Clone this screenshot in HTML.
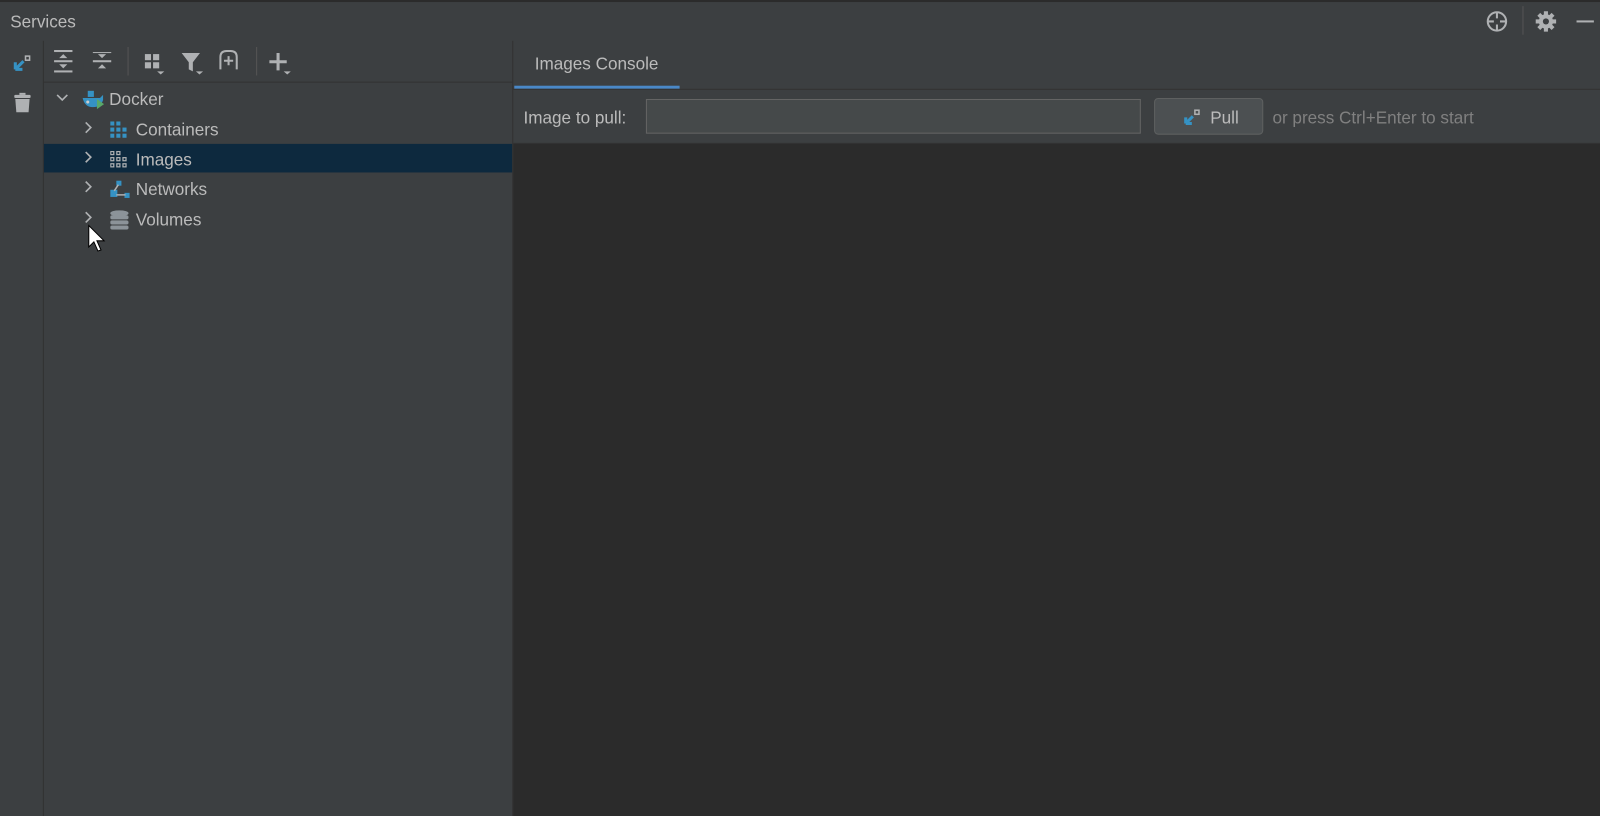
<!DOCTYPE html>
<html><head><style>
*{margin:0;padding:0;box-sizing:border-box}
body{width:1600px;height:800px;background:#3c3f41;font-family:"Liberation Sans",sans-serif;color:#bbbbbb;overflow:hidden}
#w{position:relative;width:1568px;height:784px;transform:scale(1.020408);transform-origin:0 0}
.a{position:absolute}
.t{font-size:16.8px;white-space:nowrap}
</style></head><body><div id="w">
<div class="a" style="left:0;top:0;width:1568px;height:2px;background:#2b2b2b"></div>
<div class="a t" style="left:10px;top:12px;">Services</div>
<svg class="a" style="left:1455px;top:9px" width="24" height="24" viewBox="0 0 24 24"><circle cx="12" cy="12" r="9" fill="none" stroke="#afb1b3" stroke-width="2"/><path d="M12 3v6M12 15v6M3 12h6M15 12h6" stroke="#afb1b3" stroke-width="2"/></svg>
<div class="a" style="left:1492px;top:6px;width:1px;height:28px;background:#555"></div>
<svg class="a" style="left:1504px;top:10px" width="22" height="22" viewBox="0 0 22 22"><g fill="#afb1b3"><circle cx="11" cy="11" r="7"/><g stroke="#afb1b3" stroke-width="4"><path d="M11 1v20M1 11h20M4 4l14 14M18 4L4 18"/></g></g><circle cx="11" cy="11" r="3" fill="#3c3f41"/></svg>
<div class="a" style="left:1545px;top:20px;width:17px;height:2px;background:#afb1b3"></div>
<div class="a" style="left:42px;top:40px;width:1px;height:760px;background:#323232"></div>
<svg class="a" style="left:12px;top:52px" width="20" height="20" viewBox="0 0 20 20"><path d="M3 16L11 8M3 16h7M3 16V9" stroke="#3592c4" stroke-width="3" fill="none"/><rect x="13" y="3" width="4" height="4" fill="none" stroke="#afb1b3" stroke-width="1.5"/></svg>
<svg class="a" style="left:12px;top:90px" width="20" height="22" viewBox="0 0 20 22"><rect x="2" y="3" width="16" height="3" rx="1" fill="#afb1b3"/><rect x="7" y="1" width="6" height="2" fill="#afb1b3"/><path d="M3 7h14l-1 13H4z" fill="#afb1b3"/></svg>
<svg class="a" style="left:50px;top:46px" width="250" height="30" viewBox="0 0 250 30">
<g fill="#afb1b3" stroke="none">
<rect x="3" y="3" width="18" height="2"/><rect x="3" y="23" width="18" height="2"/><path d="M12 7l-4 4h8zM12 21l-4-4h8z"/><rect x="3" y="13" width="18" height="2"/>
<rect x="41" y="13" width="18" height="2"/><path d="M50 11l-4-4h8zM50 17l-4 4h8z"/><rect x="41" y="5" width="18" height="1"/>
<rect x="92" y="7" width="6" height="6"/><rect x="100" y="7" width="6" height="6"/><rect x="92" y="15" width="6" height="6"/><rect x="100" y="15" width="6" height="6"/><path d="M104 24h7l-3.5 3z"/>
<path d="M128 6h18l-7 9v9l-4-2v-7z"/><path d="M142 24h7l-3.5 3z"/>
<path d="M221 6h3v7h7v3h-7v7h-3v-7h-7v-3h7z"/><path d="M228 24h7l-3.5 3z"/>
</g>
<path d="M166 22V10q0-6 6-6h4q6 0 6 6v12M174 9v9M169.5 13.5h9" stroke="#afb1b3" stroke-width="2" fill="none"/>
<rect x="75" y="0" width="1" height="28" fill="#555"/><rect x="201" y="0" width="1" height="28" fill="#555"/>
</svg>
<div class="a" style="left:43px;top:80px;width:459px;height:1px;background:#323232"></div>
<svg class="a" style="left:54px;top:89px" width="14" height="14"><path d="M2 4l5 5 5-5" stroke="#afb1b3" stroke-width="1.6" fill="none"/></svg>
<svg class="a" style="left:80px;top:87px" width="24" height="22" viewBox="0 0 24 22"><rect x="6" y="2" width="6" height="6" fill="#3592c4"/><path d="M1 9h17l3-3v5q-2 7-10 7-8 0-10-9z" fill="#3592c4"/><circle cx="6" cy="13" r="1.5" fill="#ccc"/><path d="M15 10l7 5-7 5z" fill="#59a869"/></svg>
<div class="a t" style="left:107px;top:88px;">Docker</div>
<div class="a" style="left:43px;top:141px;width:459px;height:28px;background:#0d293e"></div>
<svg class="a" style="left:80px;top:118px" width="14" height="110"><g stroke="#afb1b3" stroke-width="1.6" fill="none"><path d="M4 2l5 5-5 5"/><path d="M4 31l5 5-5 5"/><path d="M4 60l5 5-5 5"/><path d="M4 90l5 5-5 5"/></g></svg>
<svg class="a" style="left:108px;top:119px" width="18" height="18"><g fill="#3592c4"><rect x="0" y="0" width="4" height="4"/><rect x="0" y="6" width="4" height="4"/><rect x="6" y="6" width="4" height="4"/><rect x="6" y="12" width="4" height="4"/><rect x="0" y="12" width="4" height="4"/><rect x="12" y="6" width="4" height="4"/><rect x="12" y="12" width="4" height="4"/><rect x="6" y="0" width="4" height="4"/></g></svg>
<div class="a t" style="left:133px;top:118px;">Containers</div>
<svg class="a" style="left:108px;top:148px" width="18" height="18"><g fill="none" stroke="#afb1b3" stroke-width="1.2"><rect x="0.5" y="0.5" width="3" height="3"/><rect x="6.5" y="0.5" width="3" height="3"/><rect x="0.5" y="6.5" width="3" height="3"/><rect x="6.5" y="6.5" width="3" height="3"/><rect x="12.5" y="6.5" width="3" height="3"/><rect x="0.5" y="12.5" width="3" height="3"/><rect x="6.5" y="12.5" width="3" height="3"/><rect x="12.5" y="12.5" width="3" height="3"/></g></svg>
<div class="a t" style="left:133px;top:147px;">Images</div>
<svg class="a" style="left:108px;top:177px" width="20" height="18"><rect x="6" y="0" width="5" height="5" fill="#3592c4"/><rect x="0" y="9" width="7" height="7" fill="#3592c4"/><rect x="14" y="12" width="5" height="5" fill="#3592c4"/><path d="M8 4l-4 6M6 14h9" stroke="#afb1b3" stroke-width="1.5"/></svg>
<div class="a t" style="left:133px;top:176px;">Networks</div>
<svg class="a" style="left:108px;top:206px" width="18" height="19"><g fill="#8c9399"><ellipse cx="9" cy="3" rx="9" ry="3"/><rect x="0" y="5" width="18" height="4" rx="2"/><rect x="0" y="10" width="18" height="4" rx="2"/><rect x="0" y="15" width="18" height="4" rx="2"/></g></svg>
<div class="a t" style="left:133px;top:206px;">Volumes</div>
<svg class="a" style="left:86px;top:220px" width="20" height="28" viewBox="0 0 20 28"><path d="M1 1v21l5-5 4 9 3-1-4-9h7z" fill="#fff" stroke="#000" stroke-width="1"/></svg>
<div class="a" style="left:502px;top:40px;width:1px;height:760px;background:#323232"></div>
<div class="a t" style="left:524px;top:53px;">Images Console</div>
<div class="a" style="left:504px;top:84px;width:162px;height:3px;background:#4a88c7"></div>
<div class="a" style="left:503px;top:87px;width:1097px;height:1px;background:#323232"></div>
<div class="a t" style="left:513px;top:106px;">Image to pull:</div>
<div class="a" style="left:633px;top:97px;width:485px;height:34px;background:#45494a;border:1px solid #646464"></div>
<div class="a" style="left:1131px;top:96px;width:107px;height:36px;background:#4c5052;border:1px solid #5e6060;border-radius:4px"></div>
<svg class="a" style="left:1159px;top:106px" width="20" height="18" viewBox="0 0 20 18"><path d="M3 15L10 8M3 15h6M3 15V9" stroke="#3592c4" stroke-width="3" fill="none"/><rect x="12" y="2" width="4" height="4" fill="none" stroke="#afb1b3" stroke-width="1.5"/></svg>
<div class="a t" style="left:1186px;top:106px;">Pull</div>
<div class="a t" style="left:1247px;top:106px;color:#808080">or press Ctrl+Enter to start</div>
<div class="a" style="left:503px;top:140px;width:1097px;height:1px;background:#323232"></div>
<div class="a" style="left:503px;top:141px;width:1097px;height:659px;background:#2b2b2b"></div>
</div></body></html>
